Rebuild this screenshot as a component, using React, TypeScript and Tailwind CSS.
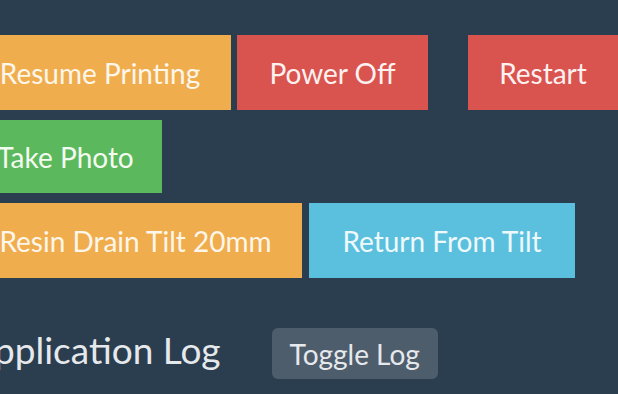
export default function App() {
  return (
    <div
      className="w-[618px] h-[394px] overflow-hidden bg-[#2b3e50]"
      style={{ fontFamily: "Lato, 'Open Sans', sans-serif" }}
    >
      <div className="ml-[-31px] pt-[35px] flex flex-col gap-[10px]">
        <div className="flex">
          <button className="w-[262px] h-[75px] bg-[#f0ad4e] text-[#fdf6ea] text-[28px]">
            Resume Printing
          </button>
          <button className="ml-[6px] w-[191px] h-[75px] bg-[#d9534f] text-[#fdf1f0] text-[28px]">
            Power Off
          </button>
          <button className="ml-[40px] w-[150px] h-[75px] shrink-0 bg-[#d9534f] text-[#fdf1f0] text-[28px]">
            Restart
          </button>
        </div>
        <div className="flex">
          <button className="w-[193px] h-[73px] bg-[#5cb85c] text-[#f3fbf1] text-[28px]">
            Take Photo
          </button>
        </div>
        <div className="flex">
          <button className="w-[333px] h-[75px] bg-[#f0ad4e] text-[#fdf6ea] text-[28px]">
            Resin Drain Tilt 20mm
          </button>
          <button className="ml-[7px] w-[266px] h-[75px] bg-[#5bc0de] text-[#eef9fc] text-[28px]">
            Return From Tilt
          </button>
        </div>
        <div className="flex items-center mt-[40px]">
          <h2 className="pb-[8px] text-[37px] text-[#e6e9ec] font-normal leading-none">
            Application Log
          </h2>
          <button className="ml-[51px] h-[51px] px-[18px] rounded-[6px] bg-[#4e5d6c] text-[#e6e9ec] text-[28px]">
            Toggle Log
          </button>
        </div>
      </div>
    </div>
  );
}
